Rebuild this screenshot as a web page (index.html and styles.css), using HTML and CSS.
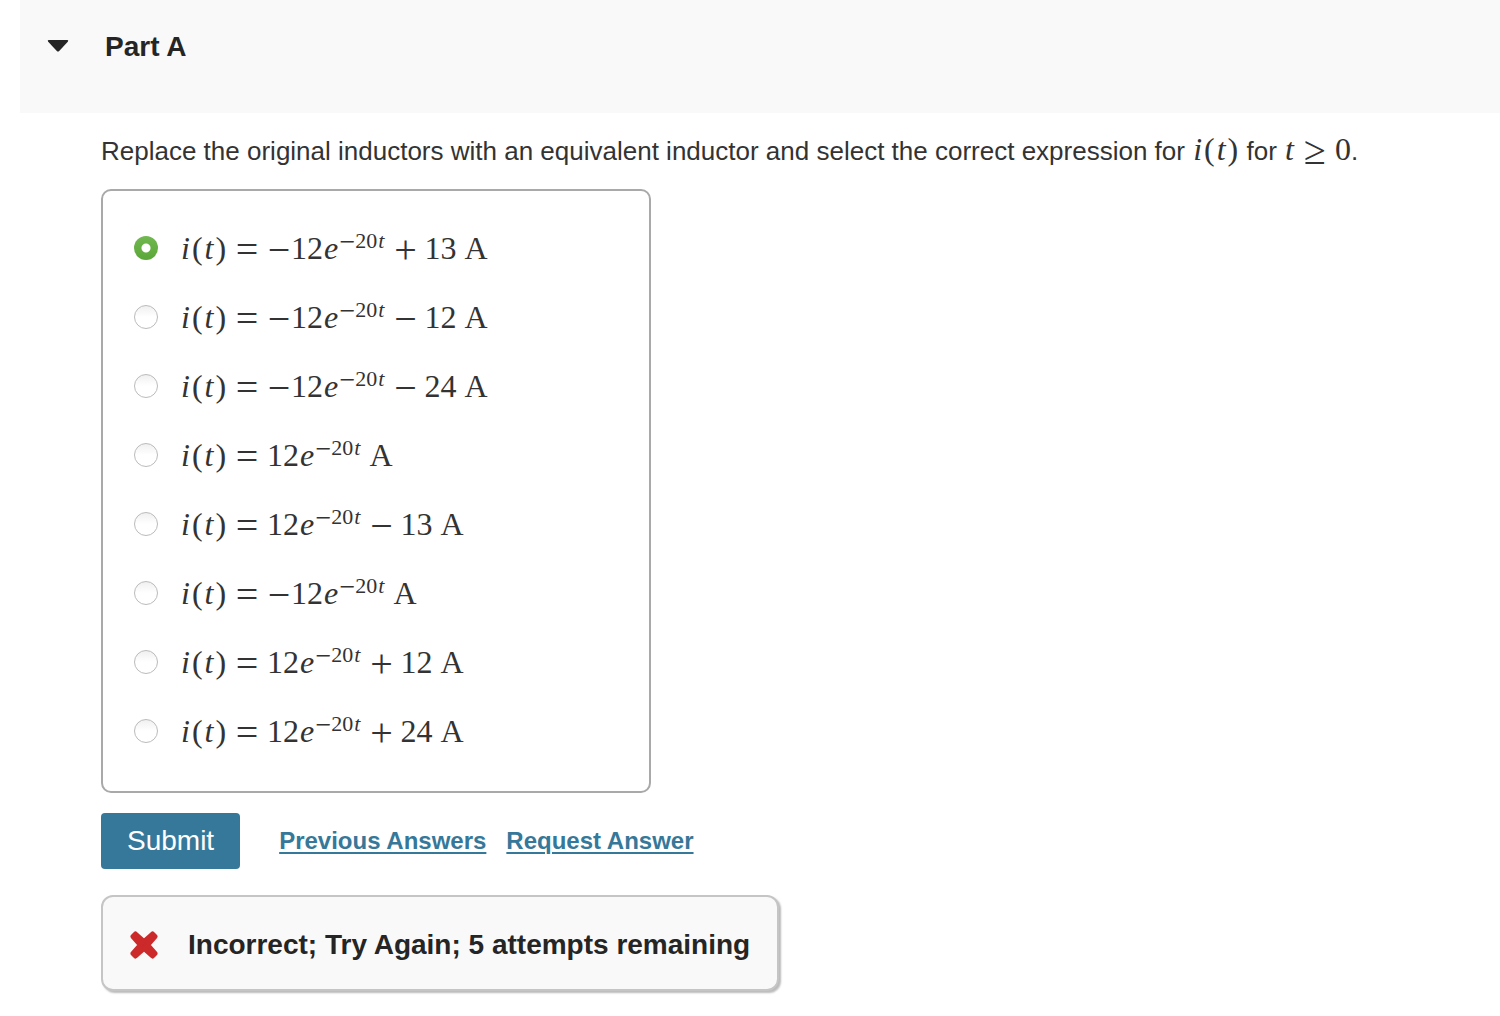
FILE: index.html
```html
<!DOCTYPE html>
<html lang="en">
<head>
    <meta charset="UTF-8">
    <meta name="viewport" content="width=device-width, initial-scale=1.0">
    <title>Part A</title>
    <link rel="stylesheet" href="styles.css">
</head>
<body>
    <div class="part-header">
        <button type="button" class="toggle" aria-label="Collapse Part A">
            <svg width="22" height="14" viewBox="0 0 22 14"><path d="M1.600 0h18.800q1.500 .3 .4 1.700L12.200 11q-1.200 1.200-2.400 0L1.200 1.700Q.1 .3 1.600 0z" fill="#252525"/></svg>
        </button>
        <h2>Part A</h2>
    </div>
    <form class="content">
        <p class="question" id="question">Replace the original inductors with an equivalent inductor and select the correct expression for <span class="math"><i>i</i><b>(</b><i>t</i><b>)</b></span> for <span class="math"><i>t</i><span class="op rel">≥</span>0</span>.</p>

        <div class="options" role="radiogroup" aria-labelledby="question">
            <label class="option"><input type="radio" name="answer" checked><span class="math"><i>i</i><b>(</b><i>t</i><b>)</b><span class="op rel">=</span><span class="op">−</span>12<i>e</i><sup><span class="op">−</span>20<i>t</i></sup><span class="op bin">+</span>13<span class="unit">A</span></span></label>
            <label class="option"><input type="radio" name="answer"><span class="math"><i>i</i><b>(</b><i>t</i><b>)</b><span class="op rel">=</span><span class="op">−</span>12<i>e</i><sup><span class="op">−</span>20<i>t</i></sup><span class="op bin">−</span>12<span class="unit">A</span></span></label>
            <label class="option"><input type="radio" name="answer"><span class="math"><i>i</i><b>(</b><i>t</i><b>)</b><span class="op rel">=</span><span class="op">−</span>12<i>e</i><sup><span class="op">−</span>20<i>t</i></sup><span class="op bin">−</span>24<span class="unit">A</span></span></label>
            <label class="option"><input type="radio" name="answer"><span class="math"><i>i</i><b>(</b><i>t</i><b>)</b><span class="op rel">=</span>12<i>e</i><sup><span class="op">−</span>20<i>t</i></sup><span class="unit">A</span></span></label>
            <label class="option"><input type="radio" name="answer"><span class="math"><i>i</i><b>(</b><i>t</i><b>)</b><span class="op rel">=</span>12<i>e</i><sup><span class="op">−</span>20<i>t</i></sup><span class="op bin">−</span>13<span class="unit">A</span></span></label>
            <label class="option"><input type="radio" name="answer"><span class="math"><i>i</i><b>(</b><i>t</i><b>)</b><span class="op rel">=</span><span class="op">−</span>12<i>e</i><sup><span class="op">−</span>20<i>t</i></sup><span class="unit">A</span></span></label>
            <label class="option"><input type="radio" name="answer"><span class="math"><i>i</i><b>(</b><i>t</i><b>)</b><span class="op rel">=</span>12<i>e</i><sup><span class="op">−</span>20<i>t</i></sup><span class="op bin">+</span>12<span class="unit">A</span></span></label>
            <label class="option"><input type="radio" name="answer"><span class="math"><i>i</i><b>(</b><i>t</i><b>)</b><span class="op rel">=</span>12<i>e</i><sup><span class="op">−</span>20<i>t</i></sup><span class="op bin">+</span>24<span class="unit">A</span></span></label>
        </div>

        <div class="actions">
            <button type="button" class="submit">Submit</button>
            <a href="#">Previous Answers</a>
            <a href="#">Request Answer</a>
        </div>

        <div class="feedback" role="status">
            <svg width="28" height="28" viewBox="0 0 28 28"><path d="M5.500 3L14 10.500L22.500 3L25 5.500L17.500 14L25 22.500L22.500 25L14 17.500L5.500 25L3 22.500L10.500 14L3 5.500Z" fill="#cc292b" stroke="#cc292b" stroke-width="5" stroke-linejoin="round"/></svg>
            <span>Incorrect; Try Again; 5 attempts remaining</span>
        </div>
    </form>
</body>
</html>
```
FILE: styles.css
```css
body {
    margin: 0;
    background: #fff;
    color: #333;
    font-family: "Liberation Sans", Arial, sans-serif;
    font-size: 26px;
}
.part-header {
    display: flex;
    align-items: center;
    gap: 36px;
    margin-left: 20px;
    padding: 31px 27px 50px;
    background: #f9f9f9;
}
.part-header h2 {
    margin: 0;
    color: #252525;
    font-size: 28px;
    line-height: 32px;
}
.toggle {
    display: flex;
    padding: 0;
    border: none;
    background: none;
    cursor: pointer;
}
.content {
    margin: 0 20px 0 101px;
    padding-bottom: 24px;
}
.question {
    margin: 0;
    padding: 16px 0 18px;
    line-height: 40px;
}

/* formulas */
.math {
    display: inline-block;
    font-family: "Liberation Serif", "Times New Roman", serif;
    font-size: 32px;
    line-height: 40px;
    white-space: nowrap;
}
.math i {
    padding: 0 1px;
}
.math b {
    padding: 0 1px;
    font-weight: normal;
}
.math .op {
    display: inline-block;
    width: 24px;
    font-size: 40px;
    line-height: 24px;
    text-align: center;
    vertical-align: -4px;
}
.math .rel {
    margin: 0 8px;
}
.math .bin {
    margin: 0 7px 0 8px;
}
.math sup {
    font-size: 22px;
    line-height: 0;
    vertical-align: 11px;
}
.math sup .op {
    width: 16px;
    font-size: 28px;
    line-height: 0;
    vertical-align: -3px;
}
.math .unit {
    margin-left: 8px;
}

.options {
    box-sizing: border-box;
    width: 550px;
    max-width: 100%;
    padding: 22px 31px 26px;
    border: 2px solid #a9a9a9;
    border-radius: 10px;
}
.option {
    display: flex;
    align-items: center;
    gap: 22px;
    height: 69px;
}
.option input {
    appearance: none;
    width: 24px;
    height: 24px;
    margin: 0;
    border: 1px solid #bbb;
    border-radius: 50%;
    background: linear-gradient(#f0f0f0, #fff 50%);
}
.option input:checked {
    border: none;
    background: radial-gradient(circle, #fff 4px, transparent 5px), linear-gradient(#70b850, #5ba638);
}

.actions {
    display: flex;
    align-items: center;
    gap: 20px;
    margin-top: 20px;
}
.actions a {
    color: #367899;
    font-size: 24px;
    font-weight: bold;
    text-underline-offset: 3px;
    text-decoration-thickness: 2px;
}
.submit {
    height: 56px;
    margin-right: 19px;
    padding: 0 26px;
    border: none;
    border-radius: 4px;
    background: #367899;
    color: #fff;
    font-family: inherit;
    font-size: 28px;
    cursor: pointer;
}
.feedback {
    display: flex;
    align-items: center;
    gap: 30px;
    box-sizing: border-box;
    width: fit-content;
    height: 96px;
    margin-top: 26px;
    padding: 4px 27px 0;
    border: 2px solid #c5c5c5;
    border-radius: 12px;
    background: #f9f9f9;
    box-shadow: 2px 2px 2px #bbb;
    color: #252525;
    font-size: 28px;
    font-weight: bold;
}
```
